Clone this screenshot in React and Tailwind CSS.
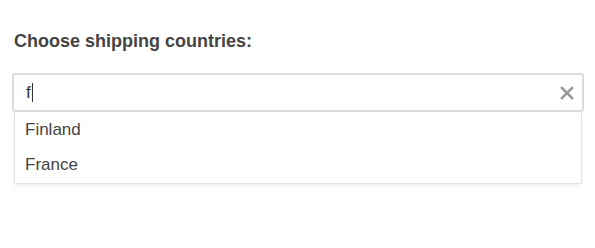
export default function App() {
  const results = ['Finland', 'France'];

  return (
    <div className="min-h-screen bg-white px-3 pt-[31px]" style={{ fontFamily: '"Liberation Sans", Arial, sans-serif' }}>
      <label className="block pl-[2px] text-[18px] font-bold leading-[20px] text-[#444]">
        Choose shipping countries:
      </label>

      <div className="mt-[22px] w-[572px]">
        {/* Search field */}
        <div className="flex h-[39px] items-center rounded-[3px] border-2 border-[#dcdcdc] bg-white pl-[12px] pr-[8px]">
          <span className="text-[17px] leading-none text-[#333]">f</span>
          <span className="ml-[1px] h-[19px] w-px bg-[#333]" />
          <span className="flex-1" />
          <svg width="14" height="14" viewBox="0 0 14 14">
            <path d="M2 2 L12 12 M12 2 L2 12" stroke="#999" strokeWidth="2.6" strokeLinecap="square" />
          </svg>
        </div>

        {/* Results */}
        <div className="mx-[2px] border border-t-0 border-[#e3e3e3] bg-white pb-[1px] shadow-[0_2px_4px_rgba(0,0,0,0.06)]">
          {results.map((name) => (
            <div key={name} className="h-[35px] pl-[10px] pt-[8px] text-[17px] leading-[20px] text-[#444]">
              {name}
            </div>
          ))}
        </div>
      </div>
    </div>
  );
}
